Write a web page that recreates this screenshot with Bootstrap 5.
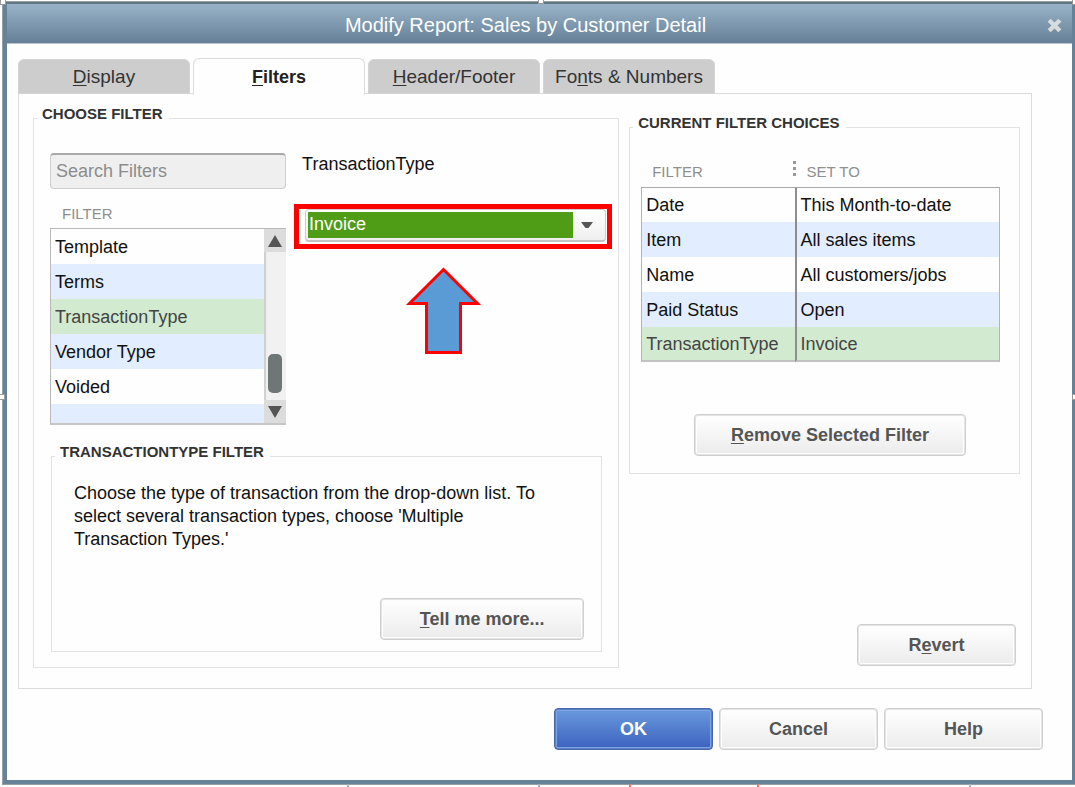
<!DOCTYPE html>
<html lang="en">
<head>
<meta charset="utf-8">
<meta name="viewport" content="width=device-width, initial-scale=1">
<title>Modify Report: Sales by Customer Detail</title>
<link href="https://cdn.jsdelivr.net/npm/bootstrap@5.3.0/dist/css/bootstrap.min.css" rel="stylesheet">
<style>
  body { font-family: "Liberation Sans", Arial, sans-serif; font-size: 18px; line-height: 22px; color: #111; background: #fff; padding: 2px 0 3px 3px; }
  .app-window { background: #fefefe; border: 4px solid #668299; border-right-width: 3px; border-top: 2px solid #60777f; outline: 1px solid #93a0a8; }
  .title-bar { height: 40px; padding: 3px 28px 0 0; background: linear-gradient(#98b3c8, #668197); color: #fff; border-bottom: 1px solid #b9c6d0; }
  .title-text { font-size: 20px; line-height: 24px; }
  .close-btn { right: 10px; top: 14px; line-height: 0; }
  .client { padding: 14px 40px 0 11px; }

  .tab-strip { gap: 3px; border: 0; }
  .tab-strip .nav-item { width: 172px; }
  .tab-strip .nav-link { width: 100%; height: 35px; margin: 1px 0 0; padding: 0; border: 1px solid #d4d4d4; border-radius: 6px 6px 0 0; background: #cdcdcd; color: #333; font-size: 19px; line-height: 29px; }
  .tab-strip .nav-link.active { height: 37px; margin: 0 0 -1px; background: #fefefe; border-color: #dcdcdc #dcdcdc #fefefe; color: #222; font-size: 18px; font-weight: 700; line-height: 32px; position: relative; }
  .tab-strip u, .action-btn u { text-underline-offset: 2px; }

  .tab-panel { border: 1px solid #dcdcdc; margin-top: -1px; padding: 11px 11px 20px 14px; display: grid; grid-template-columns: 3fr 2fr; column-gap: 10px; }
  .group { border: 1px solid #e2e2e2; }
  .group > legend { font-size: 15px; font-weight: 700; line-height: 18px; color: #333; margin: 0 0 0 3px; padding: 0 6px 8px 5px; }
  .choose-cols { display: grid; grid-template-columns: 236fr 318fr; column-gap: 8px; padding: 22px 6px 0 16px; }

  .search-box { height: 36px; padding: 0 5px; font-size: 18px; background: #efefef; border: 1px solid #cfcfcf; border-top: 2px solid #a9a9a9; border-radius: 4px; }
  .search-box::placeholder { color: #8c8c8c; }
  .col-head { font-size: 15px; line-height: 18px; font-weight: 400; color: #8f8f8f; }
  .list-head { padding: 16px 0 5px 12px; }
  .list-frame { height: 197px; border: 1px solid #b9b9b9; border-right: 0; border-bottom: 2px solid #c6c6c6; }
  .pick-row { height: 35px; flex: none; padding: 0 4px; border: 0; text-align: left; background: #fefefe; color: #111; }
  .pick-row:nth-child(even) { background: #e2eeff; }
  .pick-row.chosen { background: #d2ebd0; color: #444; }
  .scroll-rail { width: 22px; background: #f1f1f1; box-shadow: inset 2px 0 1px #cfcfcf; }
  .rail-arrow { height: 23px; border: 0; padding: 0; background: #dcdcdc; line-height: 0; }
  .rail-thumb { width: 14px; height: 39px; border-radius: 5px; background: #6f7676; margin: auto auto 7px; }

  .callout { margin-top: 29px; border: 5px solid #f00; padding: 0 1px 2px 6px; }
  .type-select { height: 33px; padding: 0 36px 2px 3px; font-size: 18px; color: #fff; border: 1px solid #ccc; border-bottom: 2px solid #c4c4c4; border-radius: 4px;
    background: url("data:image/svg+xml,%3Csvg xmlns='http://www.w3.org/2000/svg' width='12' height='7'%3E%3Cpath d='M0 0h12L7.5 6h-3z' fill='%23555'/%3E%3C/svg%3E") right 12px center no-repeat,
      linear-gradient(#4f9d17, #4f9d17) 2px 2px / calc(100% - 34px) 26px no-repeat,
      linear-gradient(#fff, #efefef); }
  .type-select option { color: #111; }
  .pointer { margin: 17px 0 0 111px; }

  .help-group { margin: 18px 16px 15px 17px; }
  .help-text { line-height: 23px; padding: 13px 64px 0 22px; margin: 0 0 47px; }

  .side { margin-top: 9px; }
  .choices { margin: 19px 19px 52px 11px; width: calc(100% - 30px); border-collapse: separate; border-spacing: 0; table-layout: fixed; }
  .choices th:first-child { width: 43%; }
  .choices th { height: 28px; padding: 0 0 3px 11px; }
  .choices td { height: 35px; padding: 0 3px 0 4px; border-left: 1px solid #b4b4b4; }
  .choices td + td { border-left: 2px solid #8e8e8e; border-right: 1px solid #b4b4b4; padding-left: 3px; }
  .choices tbody tr:first-child td { border-top: 1px solid #a9a9a9; }
  .choices tbody tr:last-child td { border-bottom: 2px solid #c2c2c2; }
  .choices tbody tr:nth-child(even) { background: #e2eeff; }
  .choices tbody tr.chosen { background: #d2ebd0; color: #444; }
  .grip { left: -2px; top: 2px; line-height: 0; }

  .action-btn { height: 42px; width: 159px; padding: 0; font-size: 18px; font-weight: 700; line-height: 38px; color: #555; border: 1px solid #cfcfcf; border-radius: 4px; background: linear-gradient(#fff, #ebebeb); box-shadow: inset 0 0 0 1px #e4e4e4, inset 0 0 0 2px #fdfdfd; }
  .action-btn:hover { color: #333; border-color: #bbb; }
  .wide-btn { width: 272px; margin: 0 53px 17px auto; }
  .more-btn { width: 204px; margin: 0 17px 11px auto; }
  .revert-btn { margin: auto 4px 2px auto; }
  .ok-btn, .ok-btn:hover { color: #fff; border-color: #4767a8; background: linear-gradient(#6b9add, #3b62bf); box-shadow: inset 0 0 0 1px #5a7fc6, inset 0 0 0 2px #7ea4e2; }
  .dialog-actions { gap: 6px; padding: 19px 29px 30px 0; }

  .handle { position: absolute; width: 6px; height: 6px; background: #fff; border: 1px solid #999; }
  .stray { position: absolute; bottom: 0; width: 2px; height: 3px; background: #aab4c0; }
  .stray.hot { background: #f07078; }
</style>
</head>
<body class="position-relative overflow-x-hidden">
<main class="app-window">
  <header class="title-bar position-relative d-flex align-items-center justify-content-center">
    <h1 class="title-text m-0 fw-normal">Modify Report: Sales by Customer Detail</h1>
    <button type="button" class="close-btn position-absolute border-0 p-0 bg-transparent" aria-label="Close">
      <svg width="15" height="15" viewBox="0 0 14 14"><path d="M2 2L12 12M12 2L2 12" stroke="#d9dcde" stroke-width="4"/></svg>
    </button>
  </header>

  <div class="client">
    <ul class="nav nav-tabs tab-strip" role="tablist">
      <li class="nav-item" role="presentation"><button type="button" role="tab" class="nav-link"><u>D</u>isplay</button></li>
      <li class="nav-item" role="presentation"><button type="button" role="tab" class="nav-link active" aria-selected="true"><u>F</u>ilters</button></li>
      <li class="nav-item" role="presentation"><button type="button" role="tab" class="nav-link"><u>H</u>eader/Footer</button></li>
      <li class="nav-item" role="presentation"><button type="button" role="tab" class="nav-link">Fo<u>n</u>ts &amp; Numbers</button></li>
    </ul>

    <section class="tab-panel" role="tabpanel">
      <fieldset class="group">
        <legend class="float-none w-auto">CHOOSE FILTER</legend>
        <div class="choose-cols">
          <div>
            <input type="search" class="search-box form-control" placeholder="Search Filters" aria-label="Search Filters">
            <div class="col-head list-head">FILTER</div>
            <div class="list-frame d-flex">
              <div class="flex-grow-1 d-flex flex-column overflow-hidden">
                <button type="button" class="pick-row">Template</button>
                <button type="button" class="pick-row">Terms</button>
                <button type="button" class="pick-row chosen">TransactionType</button>
                <button type="button" class="pick-row">Vendor Type</button>
                <button type="button" class="pick-row">Voided</button>
                <button type="button" class="pick-row" aria-label="Empty row"></button>
              </div>
              <div class="scroll-rail d-flex flex-column">
                <button type="button" class="rail-arrow" aria-label="Scroll up"><svg width="14" height="12"><path d="M7 0L14 12H0z" fill="#555"/></svg></button>
                <div class="rail-thumb"></div>
                <button type="button" class="rail-arrow" aria-label="Scroll down"><svg width="14" height="12"><path d="M0 0H14L7 12z" fill="#555"/></svg></button>
              </div>
            </div>
          </div>
          <div>
            <label for="txn-type" class="d-block ms-2">TransactionType</label>
            <div class="callout">
              <select id="txn-type" class="type-select form-select">
                <option selected>Invoice</option>
              </select>
            </div>
            <svg class="pointer d-block" width="77" height="90" viewBox="0 0 77 90"><path d="M38.500 3.500L72.500 37.500H55.500V86.500H21.500V37.500H4.500Z" fill="#5b9bd5" stroke="#f00" stroke-width="3"/></svg>
          </div>
        </div>
        <fieldset class="group help-group">
          <legend class="float-none w-auto">TRANSACTIONTYPE FILTER</legend>
          <p class="help-text">Choose the type of transaction from the drop-down list. To select several transaction types, choose 'Multiple Transaction Types.'</p>
          <button type="button" class="btn action-btn more-btn d-block"><u>T</u>ell me more...</button>
        </fieldset>
      </fieldset>

      <div class="side d-flex flex-column">
        <fieldset class="group">
          <legend class="float-none w-auto">CURRENT FILTER CHOICES</legend>
          <table class="choices">
            <thead>
              <tr>
                <th class="col-head" scope="col">FILTER</th>
                <th class="col-head position-relative" scope="col"><svg class="grip position-absolute" width="3" height="16"><path d="M0 0h3v3H0zM0 6h3v3H0zM0 12h3v3H0z" fill="#999"/></svg>SET TO</th>
              </tr>
            </thead>
            <tbody>
              <tr><td>Date</td><td>This Month-to-date</td></tr>
              <tr><td>Item</td><td>All sales items</td></tr>
              <tr><td>Name</td><td>All customers/jobs</td></tr>
              <tr><td>Paid Status</td><td>Open</td></tr>
              <tr class="chosen"><td>TransactionType</td><td>Invoice</td></tr>
            </tbody>
          </table>
          <button type="button" class="btn action-btn wide-btn d-block"><u>R</u>emove Selected Filter</button>
        </fieldset>
        <button type="button" class="btn action-btn revert-btn">R<u>e</u>vert</button>
      </div>
    </section>
  </div>

  <footer class="dialog-actions d-flex justify-content-end">
    <button type="button" class="btn action-btn ok-btn">OK</button>
    <button type="button" class="btn action-btn">Cancel</button>
    <button type="button" class="btn action-btn">Help</button>
  </footer>
</main>

<span class="handle" style="left:0;top:-1px"></span>
<span class="handle" style="left:50%;top:-2px"></span>
<span class="handle" style="right:-3px;top:-1px"></span>
<span class="handle" style="left:-1px;top:50%"></span>
<span class="handle" style="right:-3px;top:50%"></span>
<span class="stray" style="left:32.300%"></span>
<span class="stray" style="left:50%"></span>
<span class="stray hot" style="left:58.500%"></span>
<span class="stray hot" style="left:70.400%"></span>
<span class="stray" style="left:90.100%"></span>
<script src="https://cdn.jsdelivr.net/npm/bootstrap@5.3.0/dist/js/bootstrap.bundle.min.js"></script>
</body>
</html>
